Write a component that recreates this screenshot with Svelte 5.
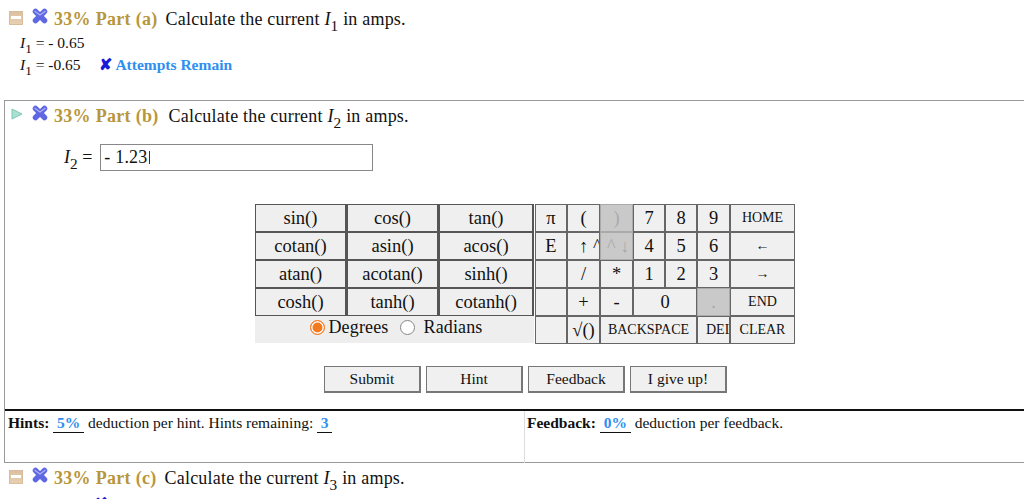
<!-- Homework problem page: three parts, with the calculator keypad open on part (b) -->
<script lang="ts">
	const funcs = [
		'sin()', 'cos()', 'tan()',
		'cotan()', 'asin()', 'acos()',
		'atan()', 'acotan()', 'sinh()',
		'cosh()', 'tanh()', 'cotanh()'
	];

	// small = caps labels, off = greyed out key, wide = spans columns
	const keys = [
		{ t: 'π' }, { t: '(' }, { t: ')', off: true }, { t: '7' }, { t: '8' }, { t: '9' }, { t: 'HOME', small: true },
		{ t: 'E' }, { t: '↑ ^', up: true }, { t: '^ ↓', off: true, clip: true }, { t: '4' }, { t: '5' }, { t: '6' }, { t: '←', small: true },
		{ t: '' }, { t: '/' }, { t: '*' }, { t: '1' }, { t: '2' }, { t: '3' }, { t: '→', small: true },
		{ t: '' }, { t: '+' }, { t: '-' }, { t: '0', wide: 2 }, { t: '.', off: true }, { t: 'END', small: true },
		{ t: '' }, { t: '√()' }, { t: 'BACKSPACE', small: true, wide: 3 }, { t: 'DEL', small: true, del: true }, { t: 'CLEAR', small: true }
	];

	const buttons = ['Submit', 'Hint', 'Feedback', 'I give up!'];
</script>

{#snippet crossIcon()}
	<svg class="cross" viewBox="0 0 16 16" aria-hidden="true">
		<path d="M3.500 3.500 12.500 12.500M12.500 3.500 3.500 12.500" fill="none" stroke="#5f68e2" stroke-width="5.500" stroke-linecap="round" />
		<path d="M2.800 3.300 8 7l5.200-3.700" fill="none" stroke="#aeb2f4" stroke-width="1.200" stroke-linecap="round" />
	</svg>
{/snippet}

{#snippet minusIcon()}
	<span class="minus"><span></span></span>
{/snippet}

{#snippet partHead(label: string, sub: string)}
	<span class="pct">33% Part ({label})</span>
	<span class="question">Calculate the current <i>I</i><sub>{sub}</sub> in amps.</span>
{/snippet}

<main>
	<section class="part-a">
		<div class="head">
			{@render minusIcon()}
			{@render crossIcon()}
			{@render partHead('a', '1')}
		</div>
		<div class="answer">
			<div><i>I</i><sub>1</sub> = - 0.65</div>
			<div><i>I</i><sub>1</sub> = -0.65 <span class="remain"><span class="x">✘</span> Attempts Remain</span></div>
		</div>
	</section>

	<section class="part-b">
		<div class="head">
			<svg class="play" viewBox="0 0 12 12" aria-hidden="true">
				<path d="M1 1 11 6 1 11z" fill="#a9e0cf" stroke="#7cc8b8" stroke-width="1" stroke-linejoin="round" />
			</svg>
			{@render crossIcon()}
			{@render partHead('b', '2')}
		</div>

		<div class="entry">
			<label for="ans"><i>I</i><sub>2</sub> =</label>
			<div class="input" id="ans">- 1.23<span class="caret"></span></div>
		</div>

		<div class="calc">
			<div class="funcs">
				{#each funcs as f}
					<div class="fn">{f}</div>
				{/each}
				<div class="units">
					<span class="radio on"></span>Degrees
					<span class="radio"></span>Radians
				</div>
			</div>
			<div class="keys">
				{#each keys as k}
					<div
						class="key"
						class:off={k.off}
						class:small={k.small}
						class:clip={k.clip}
						class:up={k.up}
						class:del={k.del}
						style:grid-column={k.wide ? `span ${k.wide}` : undefined}
					>
						<span>{k.t}</span>
					</div>
				{/each}
			</div>
		</div>

		<div class="actions">
			{#each buttons as b}
				<button type="button">{b}</button>
			{/each}
		</div>

		<div class="info">
			<div class="hints">
				<b>Hints:</b> <span class="val">5%</span> deduction per hint. Hints remaining: <span class="val short">3</span>
			</div>
			<div class="feedback">
				<b>Feedback:</b> <span class="val">0%</span> deduction per feedback.
			</div>
		</div>
	</section>

	<section class="part-c">
		<div class="head">
			{@render minusIcon()}
			{@render crossIcon()}
			{@render partHead('c', '3')}
		</div>
		<div class="last">
			<div class="answer"><i>I</i><sub>3</sub> = 0.50 <span class="remain"><span class="x">✘</span> Attempts Remain</span></div>
			<div class="avail"><b>Feedback is available</b></div>
		</div>
	</section>
</main>

<style>
	:global(body) {
		margin: 0;
		background: #fff;
		overflow: hidden;
	}
	main {
		height: 499px;
		overflow: hidden;
		font-family: 'Liberation Serif', 'Times New Roman', serif;
		color: #111;
	}
	sub { font-size: 0.85em; line-height: 0; vertical-align: -0.4em; }

	/* Part headers */
	.head {
		display: flex;
		align-items: center;
		height: 24px;
		font-size: 18px;
		white-space: nowrap;
	}
	.pct { color: #b8963c; font-weight: bold; margin-right: 8px; letter-spacing: 0.3px; }
	.part-b .pct { margin-right: 10px; }
	.question { letter-spacing: 0.2px; }
	.cross { width: 16px; height: 16px; margin: -6px 6px 0 0; flex: none; }
	.minus {
		display: flex;
		align-items: center;
		justify-content: center;
		box-sizing: border-box;
		width: 14px;
		height: 14px;
		margin: -3px 9px 0 9px;
		background: linear-gradient(#dcc0a0, #e8cfb2);
		border: 1px solid #d8bc9c;
		flex: none;
	}
	.minus span { width: 10px; height: 3px; background: #fff; }
	.play { width: 12px; height: 12px; margin: -4px 9px 0 6px; flex: none; }

	.part-a { height: 100px; box-sizing: border-box; padding-top: 7px; }
	.part-a .answer { margin: 1px 0 0 20px; }
	.answer { font-size: 15.5px; line-height: 22px; }
	.remain { color: #2f8fef; font-weight: bold; margin-left: 15px; }
	.x { color: #1a1ad8; }

	/* Part (b) box */
	.part-b {
		height: 363px;
		box-sizing: border-box;
		margin-left: 4px;
		border: 1px solid #999;
		border-right: 0;
		padding-top: 3px;
	}
	.entry {
		display: flex;
		align-items: center;
		gap: 8px;
		margin: 16px 0 0 59px;
		height: 27px;
		font-size: 18px;
	}
	.input {
		box-sizing: border-box;
		width: 273px;
		height: 27px;
		border: 1px solid #888;
		padding-left: 3px;
		line-height: 25px;
		letter-spacing: 0.2px;
	}
	.caret {
		display: inline-block;
		width: 1px;
		height: 13px;
		margin-left: 1px;
		vertical-align: -1px;
		background: #2222cc;
	}

	/* Calculator */
	.calc {
		display: flex;
		gap: 1px;
		margin: 33px 0 0 250px;
	}
	.funcs {
		display: grid;
		grid-template-columns: 92px 92px 95px;
		grid-auto-rows: 28px;
		background: #eee;
		width: 279px;
		height: 139px;
	}
	.fn {
		display: flex;
		align-items: center;
		justify-content: center;
		box-sizing: border-box;
		border: 1px solid #555;
		border-right-width: 2px;
		background: #efefef;
		font-size: 18.500px;
	}
	.units {
		grid-column: 1 / -1;
		display: flex;
		align-items: center;
		justify-content: center;
		box-sizing: border-box;
		padding: 0 0 5px 4px;
		font-size: 18px;
		letter-spacing: 0.15px;
	}
	.radio {
		box-sizing: border-box;
		width: 15px;
		height: 15px;
		margin: 0 8px 0 12px;
		border-radius: 50%;
		background: #fff;
		border: 1px solid #888;
	}
	.radio.on {
		margin: 0 3px 0 0;
		background: #f47a1f;
		border: 1px solid #f47a1f;
		box-shadow: inset 0 0 0 1.500px #fff;
	}
	.keys {
		display: grid;
		grid-template-columns: 32px 33px 33px 32px 32px 33px 65px;
		grid-auto-rows: 28px;
		width: 260px;
		height: 139px;
	}
	.key {
		display: flex;
		align-items: center;
		justify-content: center;
		box-sizing: border-box;
		overflow: hidden;
		white-space: nowrap;
		border: 1px solid #666;
		background: #f0f0f0;
		font-size: 18.500px;
	}
	.key.small { font-size: 14px; }
	.key.off { background: #c9c9c9; color: #aaa; border-color: #aaa; }
	.key.clip { justify-content: flex-start; padding-left: 6px; }
	.key.up { justify-content: flex-start; padding-left: 11px; }
	.key.del { justify-content: flex-start; padding-left: 8px; }

	/* Action buttons */
	.actions {
		display: flex;
		gap: 5px;
		margin: 23px 0 0 319px;
	}
	button {
		width: 97px;
		height: 27px;
		padding: 0;
		box-sizing: border-box;
		background: #f0f0f0;
		border: 1px solid #777;
		border-bottom-width: 2px;
		border-right-width: 2px;
		font: 15.500px 'Liberation Serif', 'Times New Roman', serif;
		color: #111;
	}

	/* Hints and feedback */
	.info {
		display: flex;
		margin-top: 16px;
		border-top: 2px solid #111;
		height: 52px;
		font-size: 15.500px;
		line-height: 20px;
	}
	.hints { width: 520px; box-sizing: border-box; padding: 2px 0 0 3px; border-right: 1px solid #ddd; }
	.feedback { padding: 2px 0 0 2px; }
	.val {
		display: inline-block;
		width: 31px;
		border-bottom: 1px solid #111;
		color: #2f8fef;
		font-weight: bold;
		text-align: center;
		line-height: 18px;
	}
	.val.short { width: 15px; }

	.part-c { padding-top: 3px; }
	.last { display: flex; margin-top: 3px; }
	.last .answer { width: 510px; margin-left: 20px; flex: none; }
	.avail { font-size: 15.500px; line-height: 22px; }
</style>
